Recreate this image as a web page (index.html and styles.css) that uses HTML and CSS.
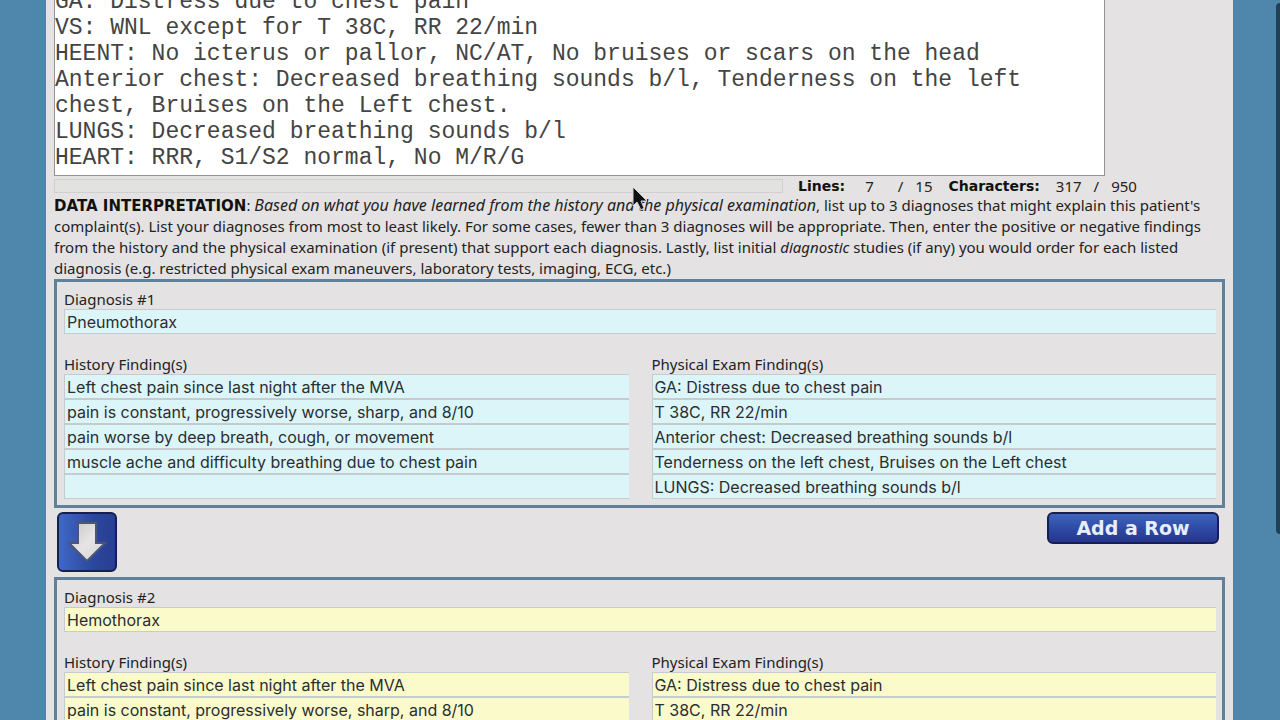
FILE: index.html
```
<!DOCTYPE html>
<html lang="en">
<head>
  <meta charset="UTF-8">
  <title>Patient Note</title>
  <link rel="stylesheet" href="styles.css">
</head>
<body>
  <main class="page">
    <textarea class="exam" aria-label="Physical Examination" spellcheck="false">GA: Distress due to chest pain
VS: WNL except for T 38C, RR 22/min
HEENT: No icterus or pallor, NC/AT, No bruises or scars on the head
Anterior chest: Decreased breathing sounds b/l, Tenderness on the left chest, Bruises on the Left chest.
LUNGS: Decreased breathing sounds b/l
HEART: RRR, S1/S2 normal, No M/R/G</textarea>
    <div class="status">
      <div class="meter"></div>
      <div class="counts">
        <b>Lines:</b><span class="lines">7</span><span>/</span><span>15</span>
        <b class="chars">Characters:</b><span>317</span><span>/</span><span>950</span>
      </div>
    </div>
    <p class="instructions"><b>DATA INTERPRETATION</b>: <i class="basis">Based on what you have learned from the history and the physical examination</i>, list up to 3 diagnoses that might explain this patient's complaint(s). List your diagnoses from most to least likely. For some cases, fewer than 3 diagnoses will be appropriate. Then, enter the positive or negative findings from the history and the physical examination (if present) that support each diagnosis. Lastly, list initial <i>diagnostic</i> studies (if any) you would order for each listed diagnosis (e.g. restricted physical exam maneuvers, laboratory tests, imaging, ECG, etc.)</p>

    <section class="diagnosis first">
      <label for="d1">Diagnosis #1</label>
      <input id="d1" type="text" value="Pneumothorax">
      <div class="findings">
        <div class="column">
          <label for="h1">History Finding(s)</label>
          <input id="h1" type="text" value="Left chest pain since last night after the MVA">
          <input type="text" aria-label="History finding 2" value="pain is constant, progressively worse, sharp, and 8/10">
          <input type="text" aria-label="History finding 3" value="pain worse by deep breath, cough, or movement">
          <input type="text" aria-label="History finding 4" value="muscle ache and difficulty breathing due to chest pain">
          <input type="text" aria-label="History finding 5">
        </div>
        <div class="column">
          <label for="p1">Physical Exam Finding(s)</label>
          <input id="p1" type="text" value="GA: Distress due to chest pain">
          <input type="text" aria-label="Exam finding 2" value="T 38C, RR 22/min">
          <input type="text" aria-label="Exam finding 3" value="Anterior chest: Decreased breathing sounds b/l">
          <input type="text" aria-label="Exam finding 4" value="Tenderness on the left chest, Bruises on the Left chest">
          <input type="text" aria-label="Exam finding 5" value="LUNGS: Decreased breathing sounds b/l">
        </div>
      </div>
    </section>

    <div class="actions">
      <button class="move" type="button" aria-label="Move down">
        <svg width="40" height="44" viewBox="0 0 40 44">
          <defs>
            <linearGradient id="silver" x1="0" y1="0" x2="1" y2="1">
              <stop offset="0" stop-color="#c4c4c8"/>
              <stop offset="0.5" stop-color="#e6e4e4"/>
              <stop offset="1" stop-color="#d4d2d4"/>
            </linearGradient>
          </defs>
          <path d="M11 3h18v20h9L20 41 2 23h9z" fill="url(#silver)" stroke="#4c5575" stroke-width="2"/>
        </svg>
      </button>
      <button class="add" type="button">Add a Row</button>
    </div>

    <section class="diagnosis second">
      <label for="d2">Diagnosis #2</label>
      <input id="d2" type="text" value="Hemothorax">
      <div class="findings">
        <div class="column">
          <label for="h2">History Finding(s)</label>
          <input id="h2" type="text" value="Left chest pain since last night after the MVA">
          <input type="text" aria-label="History finding 2" value="pain is constant, progressively worse, sharp, and 8/10">
        </div>
        <div class="column">
          <label for="p2">Physical Exam Finding(s)</label>
          <input id="p2" type="text" value="GA: Distress due to chest pain">
          <input type="text" aria-label="Exam finding 2" value="T 38C, RR 22/min">
        </div>
      </div>
    </section>
  </main>

  <div class="scroll-thumb"></div>
  <svg class="cursor" width="20" height="26" viewBox="0 0 20 26">
    <path d="M2 1v19l4-4 4 8 3-2-3-7h6z" fill="#111" stroke="#d8d6d6" stroke-width="1"/>
  </svg>
</body>
</html>
```

FILE: styles.css
```
* {
  box-sizing: border-box;
}

body {
  margin: 0;
  height: 100vh;
  overflow: hidden;
  position: relative;
  background: #4f87ac;
  color: #222;
  font-family: "Noto Sans", sans-serif;
  font-size: 15px;
  line-height: 20px;
}

.page {
  margin: 0 47px 0 46px;
  padding: 0 8px;
  min-height: 100vh;
  background: #e4e2e2;
  overflow: hidden;
}

/* the note is scrolled, its first line is cut by the window */
.exam {
  display: block;
  width: calc(100% - 120px);
  height: 190px;
  margin-top: -14px;
  padding: 2px 0 0;
  border: 1px solid #949494;
  background: #fff;
  color: #444;
  font-family: "Liberation Mono", monospace;
  font-size: 23px;
  line-height: 26px;
  resize: none;
  overflow: hidden;
}

.status {
  display: flex;
  align-items: center;
  gap: 15px;
  height: 19px;
}

.meter {
  flex: 0 0 729px;
  height: 14px;
  background: #e2e2e1;
  border: 1px solid #d0d0d0;
}

.counts {
  display: flex;
  gap: 12px;
}

.lines {
  margin: 0 12px 0 8px;
}

.chars {
  margin: 0 4px;
}

.instructions {
  margin: 0;
  line-height: 21px;
}

.instructions b,
.counts b {
  color: #111;
  font-family: "DejaVu Sans", sans-serif;
}

.instructions b,
.instructions i {
  line-height: 1;
}

.counts b {
  font-size: 14px;
}

.basis {
  font-size: 16px;
}

.diagnosis {
  padding: 7px 6px 6px 7px;
  border: 3px solid #5f819b;
}

.diagnosis label {
  display: block;
  height: 20px;
}

.diagnosis input {
  display: block;
  width: 100%;
  height: 25px;
  padding: 0 2px;
  border: 1px solid #c4cccd;
  border-width: 1px 0 1px 1px;
  color: #2a2e30;
  font-family: Inter, sans-serif;
  font-size: 16px;
}

.first input {
  background: #dcf5f9;
}

.second input {
  background: #fbfacb;
}

.findings {
  display: grid;
  grid-template-columns: 1fr 1fr;
  gap: 23px;
  margin-top: 20px;
}

.actions {
  display: flex;
  justify-content: space-between;
  align-items: flex-start;
  height: 69px;
  padding: 4px 6px 0 3px;
}

.actions button {
  border: 2px solid #151f55;
  border-radius: 6px;
}

.move {
  display: flex;
  justify-content: center;
  align-items: center;
  width: 60px;
  height: 60px;
  padding: 0;
  background: linear-gradient(90deg, #3f68c5, #2c479f 60%, #283f91);
}

.add {
  width: 172px;
  height: 32px;
  padding: 0;
  background: linear-gradient(#3f65bb, #2f4ba6 50%, #26358b);
  color: #e6eefc;
  font-family: "DejaVu Sans", sans-serif;
  font-size: 19px;
  font-weight: bold;
}

.scroll-thumb {
  position: absolute;
  top: 3px;
  right: 0;
  width: 4px;
  height: 531px;
  background: #20405a;
  border-radius: 4px 0 0 4px;
}

.cursor {
  position: absolute;
  left: 631px;
  top: 186px;
}
```
